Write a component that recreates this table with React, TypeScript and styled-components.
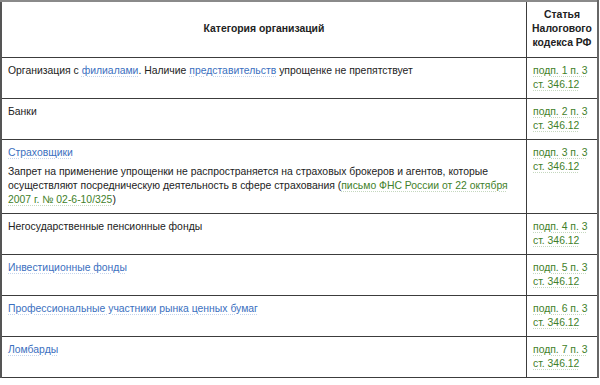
import React from 'react';
import styled, { createGlobalStyle } from 'styled-components';

const GlobalStyle = createGlobalStyle`
  body {
    margin: 0;
    background: #fff;
    font-family: "Liberation Sans", Arial, sans-serif;
    color: #222;
  }
`;

const Table = styled.table`
  width: 599px;
  table-layout: fixed;
  border-collapse: collapse;
  border-top: 2px solid #8a8a8a;
  border-left: 2px solid #555;
  border-right: 2px solid #666;
  font-size: 10.4px;
  line-height: 14px;
`;

const HeadCell = styled.th<{ $narrow?: boolean }>`
  font-weight: bold;
  text-align: center;
  vertical-align: middle;
  padding: 6px 5px 7px;
  border: 1px solid #3c3c3c;
  border-top: none;
  width: ${({ $narrow }) => ($narrow ? '60px' : 'auto')};
`;

const Cell = styled.td`
  vertical-align: top;
  padding: 6px 5px 6px 6px;
  border: 1px solid #3c3c3c;
`;

const Para = styled.p`
  margin: 0;
  & + & {
    margin-top: 5px;
  }
`;

const Link = styled.a<{ $green?: boolean }>`
  color: ${({ $green }) => ($green ? '#3f7f2a' : '#3b6fc0')};
  text-decoration: underline dotted;
  text-decoration-color: ${({ $green }) => ($green ? 'rgba(63,127,42,0.3)' : 'rgba(59,111,192,0.3)')};
  text-underline-offset: 2px;
  cursor: pointer;
`;

interface Row {
  category: React.ReactNode;
  item: number;
}

const rows: Row[] = [
  {
    category: (
      <Para>
        Организация с <Link>филиалами</Link>. Наличие <Link>представительств</Link> упрощенке не
        препятствует
      </Para>
    ),
    item: 1,
  },
  { category: <Para>Банки</Para>, item: 2 },
  {
    category: (
      <>
        <Para>
          <Link>Страховщики</Link>
        </Para>
        <Para>
          Запрет на применение упрощенки не распространяется на страховых брокеров и агентов, которые
          осуществляют посредническую деятельность в сфере страхования (
          <Link $green>письмо ФНС России от 22 октября 2007 г. № 02-6-10/325</Link>)
        </Para>
      </>
    ),
    item: 3,
  },
  { category: <Para>Негосударственные пенсионные фонды</Para>, item: 4 },
  {
    category: (
      <Para>
        <Link>Инвестиционные фонды</Link>
      </Para>
    ),
    item: 5,
  },
  {
    category: (
      <Para>
        <Link>Профессиональные участники рынка ценных бумаг</Link>
      </Para>
    ),
    item: 6,
  },
  {
    category: (
      <Para>
        <Link>Ломбарды</Link>
      </Para>
    ),
    item: 7,
  },
];

const App: React.FC = () => {
  return (
    <>
      <GlobalStyle />
      <Table>
        <thead>
          <tr>
            <HeadCell>Категория организаций</HeadCell>
            <HeadCell $narrow>Статья Налогового кодекса РФ</HeadCell>
          </tr>
        </thead>
        <tbody>
          {rows.map((row) => (
            <tr key={row.item}>
              <Cell>{row.category}</Cell>
              <Cell>
                <Link $green>
                  подп. {row.item} п. 3
                  <br />
                  ст. 346.12
                </Link>
              </Cell>
            </tr>
          ))}
        </tbody>
      </Table>
    </>
  );
};

export default App;
